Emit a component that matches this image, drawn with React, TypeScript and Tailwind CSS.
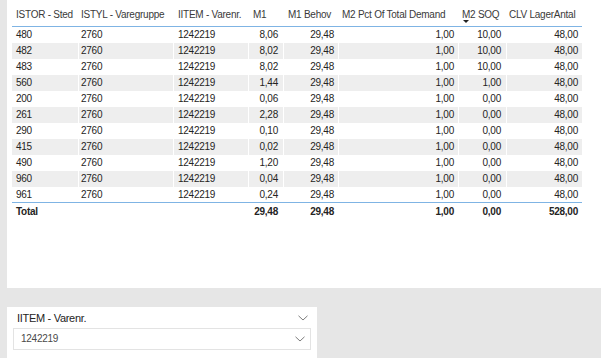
import React from "react";

const cols = "grid grid-cols-[66px_95px_75px_35px_55px_120px_48px_76px]";

const rows: [string, string][] = [
  ["480", "8,06"],
  ["482", "8,02"],
  ["483", "8,02"],
  ["560", "1,44"],
  ["200", "0,06"],
  ["261", "2,28"],
  ["290", "0,10"],
  ["415", "0,02"],
  ["490", "1,20"],
  ["960", "0,04"],
  ["961", "0,24"],
];
const soq = ["10,00", "10,00", "10,00", "1,00", "0,00", "0,00", "0,00", "0,00", "0,00", "0,00", "0,00"];

function Chevron() {
  return (
    <svg width="10" height="6" viewBox="0 0 10 6" fill="none">
      <path d="M0.5 0.8 L5 5 L9.5 0.8" stroke="#7d7d7d" strokeWidth="1" />
    </svg>
  );
}

export default function App() {
  const font = { fontFamily: '"Liberation Sans", Arial, sans-serif' };
  return (
    <div
      className="w-[601px] h-[358px] bg-[#e6e6e6] overflow-hidden flex flex-col pl-[7px] text-[10px] tracking-[-0.25px] leading-[12px]"
      style={font}
    >
      <div className="h-[288px] bg-white pl-[5px] shrink-0">
        <div className="w-[570px]">
          <div className={`${cols} h-[27px] border-b border-[#7fb4e4] text-[#3a3a3a] items-start pt-[9px]`}>
            <div className="pl-[4px] whitespace-nowrap">ISTOR - Sted</div>
            <div className="pl-[3px] whitespace-nowrap">ISTYL - Varegruppe</div>
            <div className="pl-[5px] whitespace-nowrap">IITEM - Varenr.</div>
            <div className="pl-[5px] whitespace-nowrap">M1</div>
            <div className="pl-[5px] whitespace-nowrap">M1 Behov</div>
            <div className="pl-[4px] whitespace-nowrap">M2 Pct Of Total Demand</div>
            <div className="pl-[4px] whitespace-nowrap relative">
              M2 SOQ
              <div className="absolute left-[5px] top-[11px] w-0 h-0 border-l-[3px] border-r-[3px] border-t-[3px] border-l-transparent border-r-transparent border-t-[#222]" />
            </div>
            <div className="pl-[3px] whitespace-nowrap">CLV LagerAntal</div>
          </div>
          {rows.map(([st, m1], i) => (
            <div
              key={i}
              className={`${cols} h-[16px] items-center text-[#252423] ${i % 2 === 1 ? "bg-[#eeeeee]" : "bg-white"} ${i === rows.length - 1 ? "border-b border-[#7fb4e4]" : ""}`}
            >
              <div className="pl-[4px]">{st}</div>
              <div className="pl-[2px] border-l border-white h-full flex items-center">2760</div>
              <div className="pl-[4px] border-l border-white h-full flex items-center">1242219</div>
              <div className="pr-[5px] border-l border-white h-full flex items-center justify-end">{m1}</div>
              <div className="pr-[4px] border-l border-white h-full flex items-center justify-end">29,48</div>
              <div className="pr-[4px] border-l border-white h-full flex items-center justify-end">1,00</div>
              <div className="pr-[5px] border-l border-white h-full flex items-center justify-end">{soq[i]}</div>
              <div className="pr-[4px] border-l border-white h-full flex items-center justify-end">48,00</div>
            </div>
          ))}
          <div className={`${cols} h-[17px] items-center font-bold text-[#252423]`}>
            <div className="pl-[4px]">Total</div>
            <div></div>
            <div></div>
            <div className="pr-[5px] text-right">29,48</div>
            <div className="pr-[4px] text-right">29,48</div>
            <div className="pr-[4px] text-right">1,00</div>
            <div className="pr-[5px] text-right">0,00</div>
            <div className="pr-[4px] text-right">528,00</div>
          </div>
        </div>
      </div>
      <div className="mt-[19px] w-[310px] h-[60px] bg-white shrink-0 flex flex-col">
        <div className="h-[21px] flex items-center justify-between pl-[10px] pr-[9px] text-[11px] tracking-[-0.3px] text-[#252423]">
          <span>IITEM - Varenr.</span>
          <Chevron />
        </div>
        <div className="mx-[6px] h-[22px] border border-[#e3e3e3] flex items-center justify-between pl-[7px] pr-[5px] text-[#4a4a4a]">
          <span>1242219</span>
          <Chevron />
        </div>
      </div>
    </div>
  );
}
